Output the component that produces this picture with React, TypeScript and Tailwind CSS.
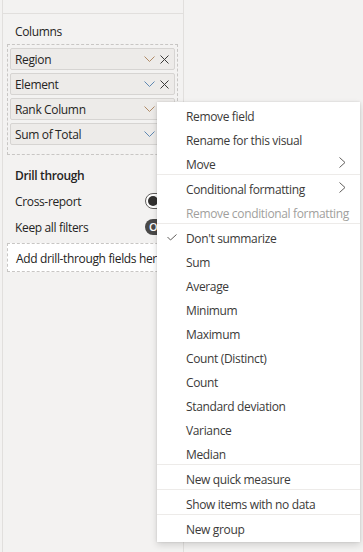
import React from "react";

const font = { fontFamily: '"Open Sans", "Noto Sans", sans-serif', letterSpacing: "-0.35px" };

function ChevDown({ color }: { color: string }) {
  return (
    <svg width="11" height="6" viewBox="0 0 11 6" className="shrink-0">
      <polyline points="0.5,0.5 5.5,5.5 10.5,0.5" fill="none" stroke={color} strokeWidth="1" />
    </svg>
  );
}

function XIcon() {
  return (
    <svg width="9" height="9" viewBox="0 0 9 9" className="shrink-0">
      <path d="M0.5 0.5 L8.5 8.5 M8.5 0.5 L0.5 8.5" stroke="#3b3a39" strokeWidth="1" fill="none" />
    </svg>
  );
}

function ChevRight() {
  return (
    <svg width="7" height="11" viewBox="0 0 7 11" className="shrink-0">
      <polyline points="0.5,0.5 6,5.5 0.5,10.5" fill="none" stroke="#605e5c" strokeWidth="1" />
    </svg>
  );
}

function Check() {
  return (
    <svg width="10" height="7" viewBox="0 0 10 7">
      <polyline points="0.5,3 3.5,6 9.5,0.5" fill="none" stroke="#605e5c" strokeWidth="1" />
    </svg>
  );
}

function Pill({ label, chev, x }: { label: string; chev: string; x?: boolean }) {
  return (
    <div className="h-[22px] flex items-center pl-[4px] pr-[4px] bg-[#edebe9] border border-[#d6d4d2] rounded-[2px]">
      <span className="text-[12px] text-[#252423] flex-1 leading-[16px] pt-[3px] self-start whitespace-nowrap">{label}</span>
      <div className="flex items-center gap-[5px] mr-[1px]">
        <ChevDown color={chev} />
        {x ? <XIcon /> : <div className="w-[9px]" />}
      </div>
    </div>
  );
}

function Item({ label, check, chev, disabled }: { label: string; check?: boolean; chev?: boolean; disabled?: boolean }) {
  return (
    <div className="h-[24px] flex items-center relative pl-[29px] pr-[14px]">
      {check && (
        <div className="absolute left-[10px] top-[10px]">
          <Check />
        </div>
      )}
      <span
        className={
          "text-[12px] leading-[16px] flex-1 self-start pt-[7px] whitespace-nowrap " +
          (disabled ? "text-[#a19f9d]" : "text-[#3b3a39]")
        }
      >
        {label}
      </span>
      {chev && <ChevRight />}
    </div>
  );
}

function Divider() {
  return <div className="h-[1px] bg-[#edebe9]" />;
}

export default function App() {
  return (
    <div className="w-[363px] h-[552px] bg-[#f3f2f1] relative overflow-hidden flex" style={font}>
      <div className="w-[2px] h-full bg-[#f3f2f1]" />
      <div className="w-[182px] h-full border-l border-r border-[#e1dfdd] flex flex-col">
        <div className="h-[14px] border-b border-[#e1dfdd]" />
        <div className="pl-[12px] mt-[10px] text-[12px] leading-[16px] text-[#252423]">Columns</div>
        <div className="ml-[4px] mr-[5px] mt-[4px] border border-dashed border-[#c8c6c4] px-[2px] pt-[3px] pb-[9px] flex flex-col gap-[3px]">
          <Pill label="Region" chev="#b08a66" x />
          <Pill label="Element" chev="#5f88b3" x />
          <Pill label="Rank Column" chev="#b08a66" />
          <Pill label="Sum of Total" chev="#5f88b3" />
        </div>
        <div className="pl-[12px] mt-[13px] text-[12px] leading-[16px] font-semibold text-[#252423]">Drill through</div>
        <div className="mt-[4px] h-[26px] flex items-center pl-[12px] pr-[8px]">
          <span className="text-[12px] leading-[16px] text-[#252423] flex-1 pt-[2px]">Cross-report</span>
          <div className="w-[30px] h-[16px] rounded-full border border-[#605e5c] bg-white flex items-center pl-[2px]">
            <div className="w-[10px] h-[10px] rounded-full bg-[#323130]" />
          </div>
        </div>
        <div className="h-[26px] flex items-center pl-[12px] pr-[8px]">
          <span className="text-[12px] leading-[16px] text-[#252423] flex-1 pt-[2px]">Keep all filters</span>
          <div className="w-[30px] h-[16px] rounded-full bg-[#4a4948] flex items-center pl-[4px]">
            <span className="text-[11px] leading-[12px] font-semibold text-white">On</span>
          </div>
        </div>
        <div className="ml-[4px] mr-[5px] mt-[3px] h-[29px] border border-dashed border-[#c8c6c4] bg-white flex items-center pl-[8px] overflow-hidden whitespace-nowrap">
          <span className="text-[12px] leading-[16px] text-[#252423] pt-[3px]">Add drill-through fields here</span>
        </div>
      </div>
      <div className="flex-1 h-full bg-[#f3f2f1]" />

      <div className="absolute left-[157px] top-[102px] w-[203px] bg-white pb-[3px] shadow-[0_3px_7px_rgba(0,0,0,0.14),0_0_2px_rgba(0,0,0,0.12)]">
        <Item label="Remove field" />
        <Item label="Rename for this visual" />
        <Item label="Move" chev />
        <Divider />
        <Item label="Conditional formatting" chev />
        <Item label="Remove conditional formatting" disabled />
        <Divider />
        <Item label="Don't summarize" check />
        <Item label="Sum" />
        <Item label="Average" />
        <Item label="Minimum" />
        <Item label="Maximum" />
        <Item label="Count (Distinct)" />
        <Item label="Count" />
        <Item label="Standard deviation" />
        <Item label="Variance" />
        <Item label="Median" />
        <Divider />
        <Item label="New quick measure" />
        <Divider />
        <Item label="Show items with no data" />
        <Divider />
        <Item label="New group" />
      </div>
    </div>
  );
}
